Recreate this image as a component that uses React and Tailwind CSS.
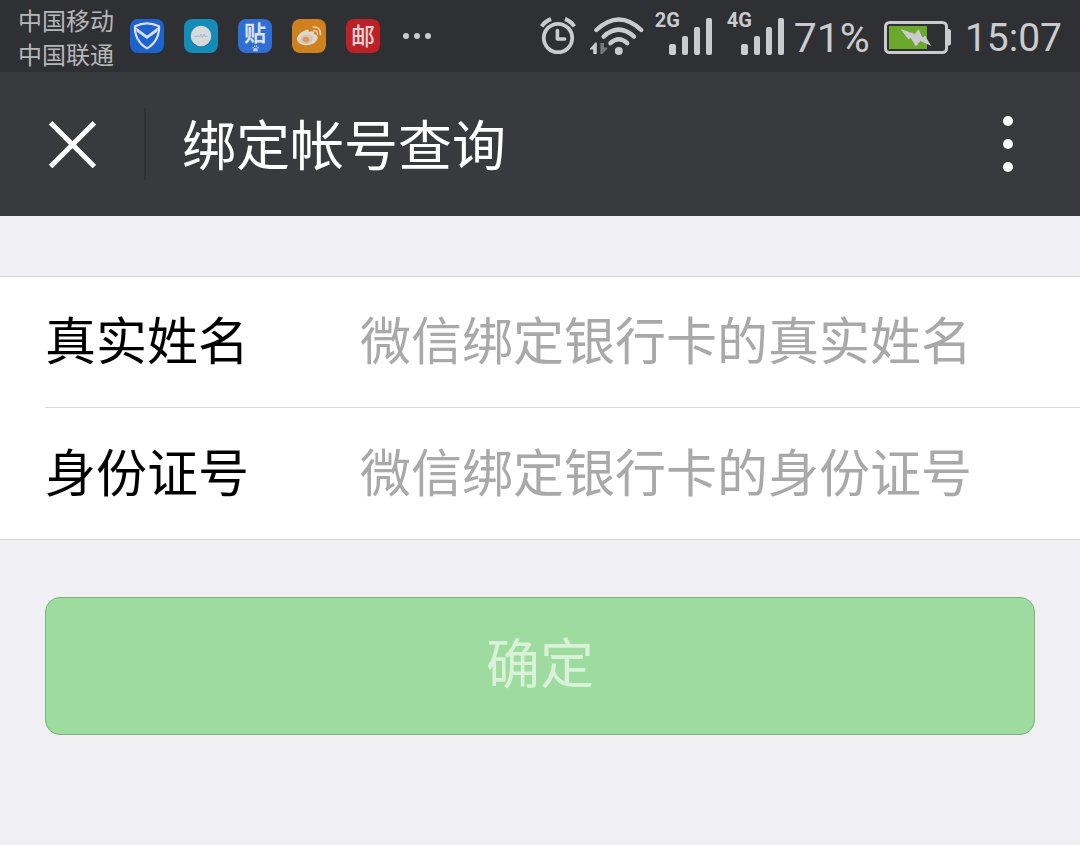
import React, { useState } from 'react';

const FIELDS = [
  { id: 'name', label: '真实姓名', placeholder: '微信绑定银行卡的真实姓名' },
  { id: 'idcard', label: '身份证号', placeholder: '微信绑定银行卡的身份证号' },
];

function ShieldApp() {
  return (
    <svg className="size-[34px]" viewBox="0 0 34 34" fill="none" aria-hidden="true">
      <rect width="34" height="34" rx="8" fill="#1d63cf" />
      <path
        d="M5 7.2Q17 1.6 29 7.2Q29.6 13 26.6 19.5Q23.4 25.8 17 29.4Q10.6 25.8 7.4 19.5Q4.4 13 5 7.2Z"
        stroke="#d9dee8"
        strokeWidth="2.2"
        strokeLinejoin="round"
      />
      <path d="M6.4 9L17 17L27.6 9L27 12.4L17 19.6L7 12.4Z" fill="#d9dee8" stroke="#d9dee8" strokeWidth="0.8" />
    </svg>
  );
}

function PulseApp() {
  return (
    <svg className="size-[34px]" viewBox="0 0 34 34" fill="none" aria-hidden="true">
      <rect width="34" height="34" rx="8" fill="#158bb8" />
      <circle cx="17" cy="17.8" r="10.3" fill="#0f6f94" />
      <circle cx="17" cy="17" r="10.3" fill="#d5dadb" />
      <path
        d="M10.5 17.4H13L14.4 16.6L15.6 18L17.2 15L18.4 18.2L20 15.4L21 17.4H23.5"
        stroke="#8fb3c0"
        strokeWidth="0.8"
      />
    </svg>
  );
}

function TiebaApp() {
  return (
    <span className="relative flex size-[34px] justify-center rounded-lg bg-[#2f6fd2]">
      <span className="text-[22px] leading-6 font-bold text-[#dcdfe6]">贴</span>
      <svg className="absolute bottom-px left-[14px] size-[7px]" viewBox="0 0 8 8" aria-hidden="true">
        <g fill="#b9c8e6">
          <ellipse cx="1.3" cy="3" rx="0.8" ry="1.1" />
          <ellipse cx="3" cy="1.4" rx="0.8" ry="1.1" />
          <ellipse cx="5.1" cy="1.4" rx="0.8" ry="1.1" />
          <ellipse cx="6.8" cy="3.2" rx="0.8" ry="1.1" />
          <path d="M4 3.2C5.2 3.2 6.8 5 6.8 6.2C6.8 7.4 5.4 7.2 4 7.2S1.2 7.4 1.2 6.2C1.2 5 2.8 3.2 4 3.2Z" />
        </g>
      </svg>
    </span>
  );
}

function WeiboApp() {
  return (
    <svg className="size-[34px]" viewBox="0 0 34 34" fill="none" aria-hidden="true">
      <rect width="34" height="34" rx="8" fill="#cf801f" />
      <path
        d="M13.6 11.2C15.6 10 17.2 10.6 16.8 12.9C20 11.6 22.8 12 22 15C24.8 15.8 26.4 17.6 25.4 20C24 24 18.8 26.4 13.6 26.2C8.6 26 5 23.4 5 19.8C5 16.6 9 12.8 13.6 11.2Z"
        fill="#dcd9d3"
      />
      <ellipse cx="14.6" cy="20.2" rx="6.6" ry="4.6" transform="rotate(-8 14.6 20.2)" fill="#dfc4a6" />
      <ellipse cx="14" cy="20.6" rx="3.4" ry="2.8" fill="#d49a67" />
      <path d="M22 11.6Q25.6 11.4 25.4 15.2" stroke="#e3c9a2" strokeWidth="1.6" strokeLinecap="round" />
      <path d="M21.4 8.2Q28.8 7.6 28.4 15.6" stroke="#e3c9a2" strokeWidth="1.8" strokeLinecap="round" />
    </svg>
  );
}

function MailApp() {
  return (
    <span className="flex size-[34px] justify-center rounded-lg bg-[#bd2026]">
      <span className="text-[24px] leading-8 font-medium text-[#e2d3d3]">邮</span>
    </span>
  );
}

function AlarmIcon() {
  return (
    <svg className="h-[38px] w-[36px]" viewBox="0 0 36 38" fill="none" aria-hidden="true">
      <g stroke="#cbcbcd">
        <circle cx="18" cy="21" r="14.2" strokeWidth="3.8" />
        <path d="M1.6 9.4Q5 4.2 11 2M34.4 9.4Q31 4.2 25 2" strokeWidth="4" />
        <path d="M17.4 13.6V22H24.6" strokeWidth="3.6" strokeLinecap="round" strokeLinejoin="round" />
      </g>
    </svg>
  );
}

function WifiIcon() {
  return (
    <svg className="-mr-[3px] h-[38px] w-[54px]" viewBox="0 0 54 38" fill="none" aria-hidden="true">
      <g stroke="#cbcbcd" strokeLinecap="round">
        <path d="M6.4 13Q28.8 -8 51.2 13" strokeWidth="4.4" />
        <path d="M13.6 19.6Q28.8 5.6 44 19.6" strokeWidth="4.4" />
        <path d="M20.4 26.2Q28.8 18.4 37.2 26.2" strokeWidth="4.4" />
      </g>
      <circle cx="28.8" cy="34" r="4" fill="#cbcbcd" />
      <path d="M6.8 25.6V37H3.2V32.4H0V31.4L5.4 25.6Z" fill="#cbcbcd" />
      <path d="M10.4 26H14V30.6H17.4V31.4L12.4 37H10.4Z" fill="#77787b" />
    </svg>
  );
}

function Signal({ network }) {
  return (
    <span className="relative h-[38px] w-[57px]">
      <span className="absolute -top-[5px] left-0 text-[20px] leading-4 font-bold">{network}</span>
      <svg className="h-[38px] w-[57px]" viewBox="0 0 57 38" fill="#cbcbcd" aria-hidden="true">
        <rect x="14" y="27" width="7" height="11" rx="2" />
        <rect x="27" y="19" width="6" height="19" rx="2" />
        <rect x="39" y="10" width="6" height="28" rx="2" />
        <rect x="51" y="1" width="6" height="37" rx="2" />
      </svg>
    </span>
  );
}

function BatteryIcon() {
  return (
    <svg className="h-[38px] w-[67px]" viewBox="0 -4 67 38" fill="none" aria-hidden="true">
      <rect x="1.5" y="1.5" width="61" height="30" rx="4" stroke="#cbcbcd" strokeWidth="3" />
      <path d="M63 8H65Q67 8 67 10V22.6Q67 24.6 65 24.6H63Z" fill="#cbcbcd" />
      <rect x="5" y="5" width="38" height="23" fill="#6aa92b" />
      <path d="M16.5 8L31 13L34.4 8L38.4 16.4L41.2 14.8L47.2 25L36.4 20L31.8 25.6L26.8 17L24.4 18.2Z" fill="#cbcbcd" />
    </svg>
  );
}

function StatusBar() {
  return (
    <div className="flex h-[72px] items-center justify-between bg-[#2f3033] px-[18px] text-[#cbcbcd]">
      <div className="flex items-center gap-5">
        <div className="-mr-1 pt-0.5 text-[24px] leading-[34px] whitespace-nowrap text-[#b5b6b8]">
          <p>中国移动</p>
          <p>中国联通</p>
        </div>
        <ShieldApp />
        <PulseApp />
        <TiebaApp />
        <WeiboApp />
        <MailApp />
        <svg className="h-[6px] w-[34px]" viewBox="0 0 34 6" fill="#cbcbcd" aria-hidden="true">
          <circle cx="6" cy="3" r="3" />
          <circle cx="17" cy="3" r="3" />
          <circle cx="28" cy="3" r="3" />
        </svg>
      </div>
      <div className="flex items-center gap-[14px] font-['Roboto',sans-serif] leading-[44px]">
        <AlarmIcon />
        <WifiIcon />
        <div className="flex gap-[15px]">
          <Signal network="2G" />
          <Signal network="4G" />
        </div>
        <span className="-ml-1 pt-1 text-[41px]">71%</span>
        <BatteryIcon />
        <span className="pt-1 text-[39px]">15:07</span>
      </div>
    </div>
  );
}

function TitleBar() {
  return (
    <header className="flex h-36 items-center bg-[#393a3e] text-white">
      <button type="button" aria-label="关闭" className="flex h-[72px] w-[146px] items-center border-r-2 border-[#2e2f33] pl-12">
        <svg className="size-12" viewBox="0 0 48 48" fill="none" stroke="currentColor" strokeWidth="5" aria-hidden="true">
          <path d="M2.6 2.8L46.4 46.6M46.4 2.8L2.6 46.6" />
        </svg>
      </button>
      <h1 className="flex-1 pb-0.5 pl-9 text-[54px] leading-[72px]">绑定帐号查询</h1>
      <button type="button" aria-label="更多" className="flex h-[72px] w-36 items-center justify-center">
        <svg className="h-14 w-[10px]" viewBox="0 0 10 56" fill="currentColor" aria-hidden="true">
          <circle cx="5" cy="5" r="5" />
          <circle cx="5" cy="28" r="5" />
          <circle cx="5" cy="51" r="5" />
        </svg>
      </button>
    </header>
  );
}

export default function App() {
  const [values, setValues] = useState({ name: '', idcard: '' });

  return (
    <div className="min-h-screen bg-[#efeff4] font-['Noto_Sans_CJK_SC',sans-serif]">
      <StatusBar />
      <TitleBar />
      <form className="pt-[60px]" onSubmit={(e) => e.preventDefault()}>
        <div className="divide-y divide-[#d9d9d9] border-y border-[#d3d3d6] bg-white pl-[45px] text-[51px] leading-[72px]">
          {FIELDS.map((field) => (
            <div key={field.id} className="flex h-[131px] items-center pb-2">
              <label htmlFor={field.id} className="w-[315px] shrink-0 text-black">
                {field.label}
              </label>
              <input
                id={field.id}
                type="text"
                className="h-[72px] min-w-0 flex-1 text-black outline-none placeholder:text-[#a9a9a9]"
                placeholder={field.placeholder}
                value={values[field.id]}
                onChange={(e) => setValues({ ...values, [field.id]: e.target.value })}
              />
            </div>
          ))}
        </div>
        <div className="px-[45px] pt-[57px]">
          <button
            type="submit"
            disabled
            className="h-[138px] w-full rounded-[15px] border border-[#7fb07f] bg-[#9edb9f] pb-[10px] text-[54px] leading-[72px] text-[#d8f1d8]"
          >
            确定
          </button>
        </div>
      </form>
    </div>
  );
}
